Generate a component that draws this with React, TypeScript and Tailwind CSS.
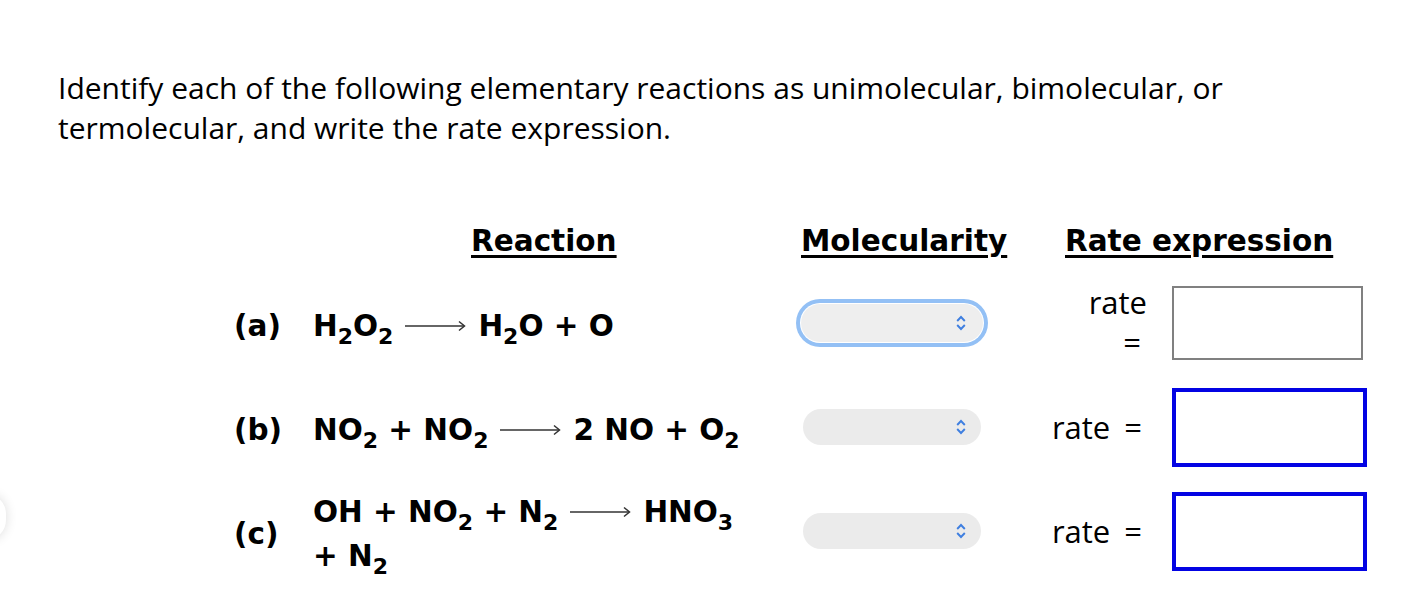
import React from 'react';

const chem = { fontFamily: '"DejaVu Sans", Verdana, sans-serif' };
const body = { fontFamily: '"Open Sans", "Noto Sans", sans-serif' };

function Sub({ children }: { children: React.ReactNode }) {
  return <span className="relative top-[8px] text-[22px] leading-none">{children}</span>;
}

function Arrow() {
  return (
    <svg width="62" height="12" viewBox="0 0 62 12" className="inline-block ml-[12px] mr-[11px] align-middle relative top-[-2px]">
      <line x1="0" y1="6" x2="59" y2="6" stroke="#333" strokeWidth="1.5" />
      <polyline points="54,1.5 59.5,6 54,10.5" fill="none" stroke="#333" strokeWidth="1.5" />
    </svg>
  );
}

function Chevron() {
  return (
    <svg width="10" height="18" viewBox="0 0 10 18">
      <polyline points="1.2,7 5,3 8.8,7" fill="none" stroke="#3f7fe0" strokeWidth="1.9" />
      <polyline points="1.2,11 5,15 8.8,11" fill="none" stroke="#3f7fe0" strokeWidth="1.9" />
    </svg>
  );
}

function Select({ focused }: { focused?: boolean }) {
  return (
    <div
      className={
        focused
          ? 'w-[182px] h-[38px] rounded-full bg-[#eeeeee] flex items-center justify-end pr-[17px] ml-[4px] ring-[4px] ring-[#93c0f5] ring-offset-[1px] ring-offset-white'
          : 'w-[178px] h-[36px] rounded-full bg-[#ebebeb] flex items-center justify-end pr-[15px] ml-[6px]'
      }
    >
      <Chevron />
    </div>
  );
}

function Row({
  label,
  reaction,
  select,
  rate,
  input,
}: {
  label: string;
  reaction: React.ReactNode;
  select: React.ReactNode;
  rate: React.ReactNode;
  input: React.ReactNode;
}) {
  return (
    <div className="flex items-center h-[80px]">
      <div className="ml-[234px] w-[79px] pt-[6px] text-[29.5px] font-bold" style={chem}>
        {label}
      </div>
      <div className="w-[484px] pt-[6px] text-[29.5px] font-bold leading-[44px]" style={chem}>
        {reaction}
      </div>
      <div className="w-[256px] flex">{select}</div>
      <div className="w-[94px] flex justify-end text-[31px] leading-[40px] whitespace-nowrap" style={body}>
        {rate}
      </div>
      <div className="ml-[25px]">{input}</div>
    </div>
  );
}

export default function App() {
  return (
    <div className="relative w-[1414px] min-h-[609px] bg-white text-black overflow-hidden">
      <div className="absolute left-[-34px] top-[494px] w-[40px] h-[46px] rounded-full bg-white shadow-[0_0_12px_rgba(0,0,0,0.14)]" />

      <div className="pl-[58px] pt-[68px] text-[30px] leading-[40px]" style={body}>
        <p>Identify each of the following elementary reactions as unimolecular, bimolecular, or</p>
        <p>termolecular, and write the rate expression.</p>
      </div>

      <div className="flex mt-[79px] text-[29.5px] leading-[28px] font-bold" style={chem}>
        <div className="ml-[471px] w-[330px]">
          <span className="underline decoration-[3px] underline-offset-[4px]">Reaction</span>
        </div>
        <div className="w-[264px]">
          <span className="underline decoration-[3px] underline-offset-[4px]">Molecularity</span>
        </div>
        <div>
          <span className="underline decoration-[3px] underline-offset-[4px]">Rate expression</span>
        </div>
      </div>

      <div className="flex flex-col gap-[24px] mt-[28px]">
        <Row
          label="(a)"
          reaction={
            <span>
              H<Sub>2</Sub>O<Sub>2</Sub>
              <Arrow />H<Sub>2</Sub>O + O
            </span>
          }
          select={<Select focused />}
          rate={
            <div className="flex flex-col items-end -mt-[2px]">
              <div>rate</div>
              <div className="pr-[6px]">=</div>
            </div>
          }
          input={<div className="w-[191px] h-[74px] border-2 border-[#808080] bg-white" />}
        />
        <Row
          label="(b)"
          reaction={
            <span>
              NO<Sub>2</Sub> + NO<Sub>2</Sub>
              <Arrow />2 NO + O<Sub>2</Sub>
            </span>
          }
          select={<Select />}
          rate={
            <span className="pr-[5px]">
              rate<span className="ml-[14px]">=</span>
            </span>
          }
          input={<div className="w-[195px] h-[79px] border-4 border-[#0303e3] bg-white" />}
        />
        <Row
          label="(c)"
          reaction={
            <div>
              <div>
                OH + NO<Sub>2</Sub> + N<Sub>2</Sub>
                <Arrow />HNO<Sub>3</Sub>
              </div>
              <div>
                + N<Sub>2</Sub>
              </div>
            </div>
          }
          select={<Select />}
          rate={
            <span className="pr-[5px]">
              rate<span className="ml-[14px]">=</span>
            </span>
          }
          input={<div className="w-[195px] h-[79px] border-4 border-[#0303e3] bg-white" />}
        />
      </div>
    </div>
  );
}
